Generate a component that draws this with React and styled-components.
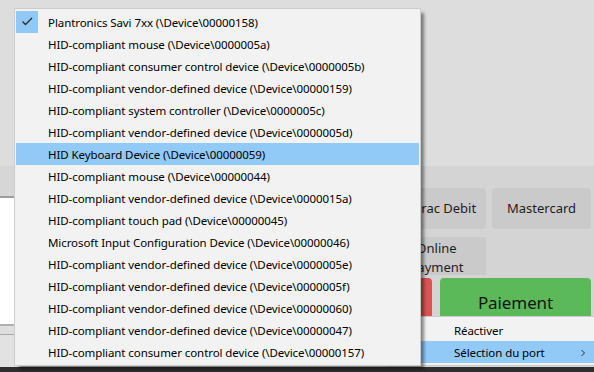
import React from "react";
import styled, { createGlobalStyle } from "styled-components";

const GlobalStyle = createGlobalStyle`
  html, body {
    margin: 0;
    padding: 0;
    background: #dddddd;
  }
  body {
    font-family: "Segoe UI", "Noto Sans", "Liberation Sans", sans-serif;
  }
`;

const devices = [
  { name: "Plantronics Savi 7xx", id: "00000158", checked: true },
  { name: "HID-compliant mouse", id: "0000005a" },
  { name: "HID-compliant consumer control device", id: "0000005b" },
  { name: "HID-compliant vendor-defined device", id: "00000159" },
  { name: "HID-compliant system controller", id: "0000005c" },
  { name: "HID-compliant vendor-defined device", id: "0000005d" },
  { name: "HID Keyboard Device", id: "00000059", hover: true },
  { name: "HID-compliant mouse", id: "00000044" },
  { name: "HID-compliant vendor-defined device", id: "0000015a" },
  { name: "HID-compliant touch pad", id: "00000045" },
  { name: "Microsoft Input Configuration Device", id: "00000046" },
  { name: "HID-compliant vendor-defined device", id: "0000005e" },
  { name: "HID-compliant vendor-defined device", id: "0000005f" },
  { name: "HID-compliant vendor-defined device", id: "00000060" },
  { name: "HID-compliant vendor-defined device", id: "00000047" },
  { name: "HID-compliant consumer control device", id: "00000157" },
];

const Screen = styled.div`
  position: relative;
  width: 594px;
  height: 372px;
  overflow: hidden;
  display: flex;
  flex-direction: column;
  background: #dddddd;
`;

const TopArea = styled.div`
  height: 166px;
  flex: none;
  background: #dddddd;
`;

const Body = styled.div`
  flex: 1;
  display: flex;
  background: #d4d4d4;
`;

const ListPane = styled.div`
  width: 386px;
  flex: none;
  display: flex;
  flex-direction: column;
`;

const PaneHeader = styled.div`
  height: 30px;
  background: #d6d6d6;
`;

const ListBox = styled.div`
  height: 126px;
  background: #ffffff;
  border-top: 2px solid #9e9e9e;
  border-bottom: 2px solid #b0b0b0;
`;

const PaneFooter = styled.div`
  flex: 1;
  background: #e2e2e2;
  display: flex;
  flex-direction: column;
`;

const FooterLine = styled.div`
  height: 8px;
  border-bottom: 1px solid #a9a9a9;
  background: #dedede;
`;

const ActionPane = styled.div`
  flex: 1;
  padding: 22px 3px 0 1px;
  display: flex;
  flex-direction: column;
`;

const ButtonGrid = styled.div`
  display: grid;
  grid-template-columns: 99px 99px;
  grid-auto-rows: 41px;
  gap: 8px 6px;
  height: 87px;
  overflow: hidden;
`;

const PayButton = styled.div`
  background: #cacaca;
  border-radius: 4px;
  display: flex;
  align-items: center;
  justify-content: center;
  text-align: center;
  font-size: 13px;
  line-height: 19px;
  color: #1e1e1e;
`;

const ActionRow = styled.div`
  margin-top: 3px;
  display: flex;
  gap: 8px;
  height: 48px;
`;

const ActionButton = styled.div`
  flex: ${(p) => (p.$grow ? 1 : "none")};
  width: ${(p) => (p.$grow ? "auto" : "45px")};
  background: ${(p) => (p.$tone === "red" ? "#dc5350" : "#5bb95a")};
  border-radius: 4px;
  display: flex;
  align-items: center;
  justify-content: center;
  font-size: 17px;
  letter-spacing: -0.1px;
  color: #151515;
`;

const StatusBar = styled.div`
  height: 5px;
  flex: none;
  background: #2e2e2e;
`;

const DeviceMenu = styled.ul`
  position: absolute;
  left: 14px;
  top: 8px;
  width: 407px;
  box-sizing: border-box;
  margin: 0;
  padding: 2px 1px;
  list-style: none;
  background: #f2f2f2;
  border: 1px solid #cccccc;
  box-shadow: 4px 4px 3px -1px rgba(0, 0, 0, 0.45);
  z-index: 2;
`;

const MenuItem = styled.li`
  position: relative;
  height: 22px;
  display: flex;
  align-items: center;
  padding-left: 32px;
  padding-top: 1px;
  box-sizing: border-box;
  font-size: 11.5px;
  letter-spacing: -0.08px;
  color: #000000;
  white-space: nowrap;
  background: ${(p) => (p.$hover ? "#91c9f7" : "transparent")};
`;

const CheckBox = styled.span`
  position: absolute;
  left: 0;
  top: 0;
  width: 22px;
  height: 22px;
  background: #90c8f6;
  display: flex;
  align-items: center;
  justify-content: center;
`;

const ContextMenu = styled.ul`
  position: absolute;
  left: 400px;
  top: 316px;
  width: 200px;
  box-sizing: border-box;
  margin: 0;
  padding: 2px 1px;
  list-style: none;
  background: #f2f2f2;
  border: 1px solid #cccccc;
  border-right: none;
  z-index: 1;
`;

const ContextItem = styled.li`
  height: 22px;
  box-sizing: border-box;
  padding-top: 1px;
  display: flex;
  align-items: center;
  padding-left: 52px;
  padding-right: 13px;
  font-size: 11.5px;
  letter-spacing: -0.08px;
  color: #000000;
  background: ${(p) => (p.$hover ? "#91c9f7" : "transparent")};
`;

const Label = styled.span`
  flex: 1;
`;

const Check = () => (
  <svg width="22" height="22" viewBox="0 0 22 22">
    <path
      d="M6.5 10.5 L9.5 13.5 L16 7"
      fill="none"
      stroke="#2b2b2b"
      strokeWidth="1.3"
    />
  </svg>
);

const Chevron = () => (
  <svg width="6" height="8" viewBox="0 0 6 8">
    <path d="M1.5 1 L4.5 4 L1.5 7" fill="none" stroke="#333" strokeWidth="1" />
  </svg>
);

export default function App() {
  return (
    <>
      <GlobalStyle />
      <Screen>
        <TopArea />
        <Body>
          <ListPane>
            <PaneHeader />
            <ListBox />
            <PaneFooter>
              <FooterLine />
            </PaneFooter>
          </ListPane>
          <ActionPane>
            <ButtonGrid>
              <PayButton>Interac Debit</PayButton>
              <PayButton>Mastercard</PayButton>
              <PayButton>
                Online
                <br />
                Payment
              </PayButton>
            </ButtonGrid>
            <ActionRow>
              <ActionButton $tone="red" />
              <ActionButton $tone="green" $grow>
                Paiement
              </ActionButton>
            </ActionRow>
          </ActionPane>
        </Body>
        <StatusBar />

        <ContextMenu>
          <ContextItem>
            <Label>Réactiver</Label>
          </ContextItem>
          <ContextItem $hover>
            <Label>Sélection du port</Label>
            <Chevron />
          </ContextItem>
        </ContextMenu>

        <DeviceMenu>
          {devices.map((d, i) => (
            <MenuItem key={i} $hover={d.hover}>
              {d.checked && (
                <CheckBox>
                  <Check />
                </CheckBox>
              )}
              {`${d.name} (\\Device\\${d.id})`}
            </MenuItem>
          ))}
        </DeviceMenu>
      </Screen>
    </>
  );
}
